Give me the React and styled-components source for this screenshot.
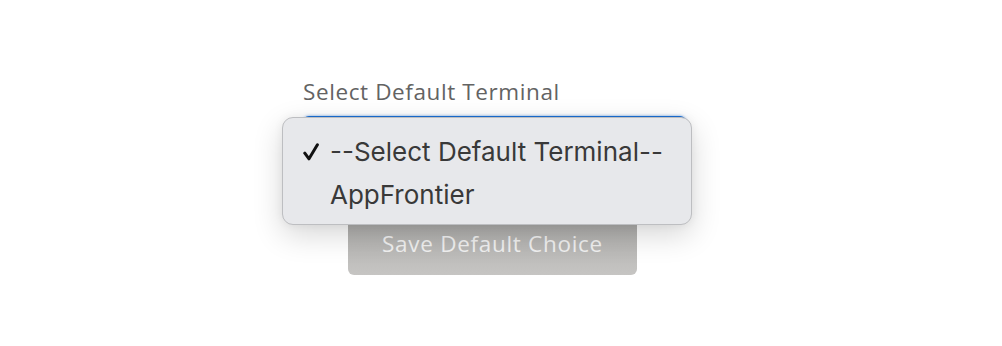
import React from "react";
import styled, { createGlobalStyle } from "styled-components";

const Global = createGlobalStyle`
  html, body { margin: 0; padding: 0; background: #ffffff; }
  body { width: 1002px; height: 346px; overflow: hidden; }
`;

const Page = styled.div`
  display: flex;
  flex-direction: column;
  align-items: flex-start;
  padding: 77px 0 0 303px;
`;

const Form = styled.div`
  display: flex;
  flex-direction: column;
  width: 383px;
`;

const Label = styled.label`
  font-family: "Open Sans", sans-serif;
  font-size: 22.5px;
  letter-spacing: 0.6px;
  line-height: 30px;
  color: #636363;
  margin-bottom: 9px;
`;

const SelectWrap = styled.div`
  position: relative;
  height: 44px;
`;

const SelectBox = styled.div`
  height: 44px;
  box-sizing: border-box;
  border: 2px solid #1a6fd6;
  border-radius: 6px;
  box-shadow: 0 0 3px rgba(26, 111, 214, 0.6);
  background: #ffffff;
`;

const Menu = styled.ul`
  position: absolute;
  left: -21px;
  top: 1px;
  width: 410px;
  height: 108px;
  box-sizing: border-box;
  margin: 0;
  padding: 12px 0 10px;
  list-style: none;
  background: #e7e8eb;
  border: 1px solid #bdbec1;
  border-radius: 11px;
  box-shadow: 0 10px 30px rgba(0, 0, 0, 0.16), 0 0 10px rgba(0, 0, 0, 0.06);
  z-index: 2;
`;

const Item = styled.li`
  display: flex;
  align-items: center;
  height: 43px;
  padding-left: 20px;
  font-family: Inter, "Noto Sans", sans-serif;
  font-size: 26px;
  color: #393939;
`;

const Check = styled.span`
  display: inline-flex;
  width: 27px;
  justify-content: flex-start;
`;

const ButtonRow = styled.div`
  display: flex;
  justify-content: center;
  margin-top: 51px;
`;

const SaveButton = styled.button`
  width: 289px;
  height: 64px;
  margin-left: -4px;
  padding: 0;
  border: none;
  border-radius: 6px;
  background: linear-gradient(#a9a8a6, #c6c5c3);
  color: #f1f1f1;
  font-family: "Open Sans", sans-serif;
  font-size: 22.5px;
  letter-spacing: 0.7px;
`;

const CheckIcon = () => (
  <svg width="16" height="18" viewBox="0 0 16 18">
    <path d="M1.8 10.2 L6 15.8 L14.4 1.8" fill="none" stroke="#111" strokeWidth="3" strokeLinecap="round" strokeLinejoin="round" />
  </svg>
);

export default function App() {
  return (
    <>
      <Global />
      <Page>
        <Form>
          <Label>Select Default Terminal</Label>
          <SelectWrap>
            <SelectBox />
            <Menu>
              <Item>
                <Check><CheckIcon /></Check>
                --Select Default Terminal--
              </Item>
              <Item>
                <Check />
                AppFrontier
              </Item>
            </Menu>
          </SelectWrap>
          <ButtonRow>
            <SaveButton disabled>Save Default Choice</SaveButton>
          </ButtonRow>
        </Form>
      </Page>
    </>
  );
}
